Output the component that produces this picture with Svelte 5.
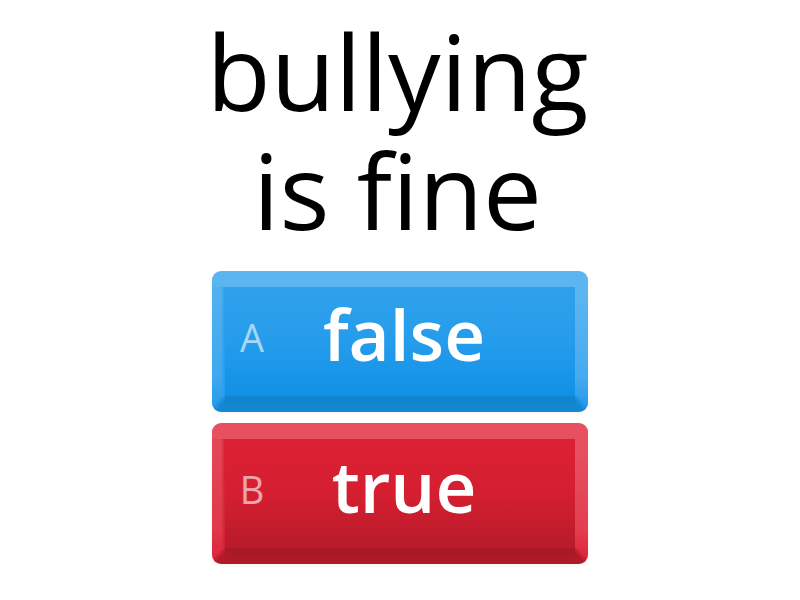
<script lang="ts">
  const question = 'bullying is fine';

  const answers = [
    { letter: 'A', text: 'false', color: 'blue' },
    { letter: 'B', text: 'true', color: 'red' }
  ];

  let selected: string | null = $state(null);
</script>

<main class="quiz">
  <h1 class="question">{question}</h1>

  <div class="answers">
    {#each answers as answer (answer.letter)}
      <button
        type="button"
        class="answer {answer.color}"
        aria-pressed={selected === answer.letter}
        onclick={() => (selected = answer.letter)}
      >
        <span class="letter">{answer.letter}</span>
        <span class="text">{answer.text}</span>
      </button>
    {/each}
  </div>
</main>

<style>
  :global(body) {
    margin: 0;
    background: #fff;
  }

  .quiz {
    width: 50%;
    margin: 0 auto;
    padding: 11px 0 36px;
    font-family: 'Open Sans', sans-serif;
  }

  .question {
    margin: 0;
    padding-right: 5px;
    color: #000;
    font-size: 105px;
    font-weight: 400;
    line-height: 119px;
    text-align: center;
  }

  .answers {
    display: flex;
    flex-direction: column;
    gap: 11px;
    width: 94%;
    margin: 22px auto 0;
  }

  .answer {
    display: grid;
    grid-template-columns: 40px 1fr 32px;
    align-items: center;
    box-sizing: border-box;
    width: 100%;
    height: 141px;
    padding: 0 20px 12px;
    border: none;
    border-radius: 9px;
    /* face, bottom bevel with its mitred corners, left shade, then the sides */
    background:
      linear-gradient(var(--face-top), var(--face-mid) 50%, var(--face-bottom)) 13px 16px / calc(100% - 26px) calc(100% - 32px) no-repeat,
      linear-gradient(var(--bevel-top), var(--bevel-bottom)) 13px 100% / calc(100% - 26px) 16px no-repeat,
      linear-gradient(to bottom right, transparent 35%, var(--bevel-bottom) 65%) 0 100% / 13px 16px no-repeat,
      linear-gradient(to bottom left, transparent 35%, var(--bevel-bottom) 65%) 100% 100% / 13px 16px no-repeat,
      linear-gradient(to right, var(--shade) 70%, var(--face-mid)) 0 16px / 13px calc(100% - 32px) no-repeat,
      linear-gradient(var(--side-top) 20%, var(--side-mid) 75%, var(--side-bottom));
    box-shadow: 0 2px 4px rgba(0, 0, 0, 0.04);
    color: #fff;
    font-family: inherit;
    cursor: pointer;
  }

  .blue {
    --face-top: #2fa1ea;
    --face-mid: #259cec;
    --face-bottom: #1191e5;
    --bevel-top: #1084ce;
    --bevel-bottom: #1288d3;
    --shade: rgba(37, 156, 236, 0.2);
    --side-top: #5ab5f0;
    --side-mid: #47aaef;
    --side-bottom: #1e96ea;
  }

  .red {
    --face-top: #dd2033;
    --face-mid: #d41f31;
    --face-bottom: #b91b2a;
    --bevel-top: #a81827;
    --bevel-bottom: #b01a29;
    --shade: rgba(212, 31, 49, 0.2);
    --side-top: #e65060;
    --side-mid: #e33f51;
    --side-bottom: #de1f37;
  }

  .letter {
    padding-top: 2px;
    font-size: 38px;
    opacity: 0.6;
  }

  .text {
    padding-bottom: 4px;
    font-size: 71px;
    font-weight: 600;
    line-height: 80px;
  }
</style>
